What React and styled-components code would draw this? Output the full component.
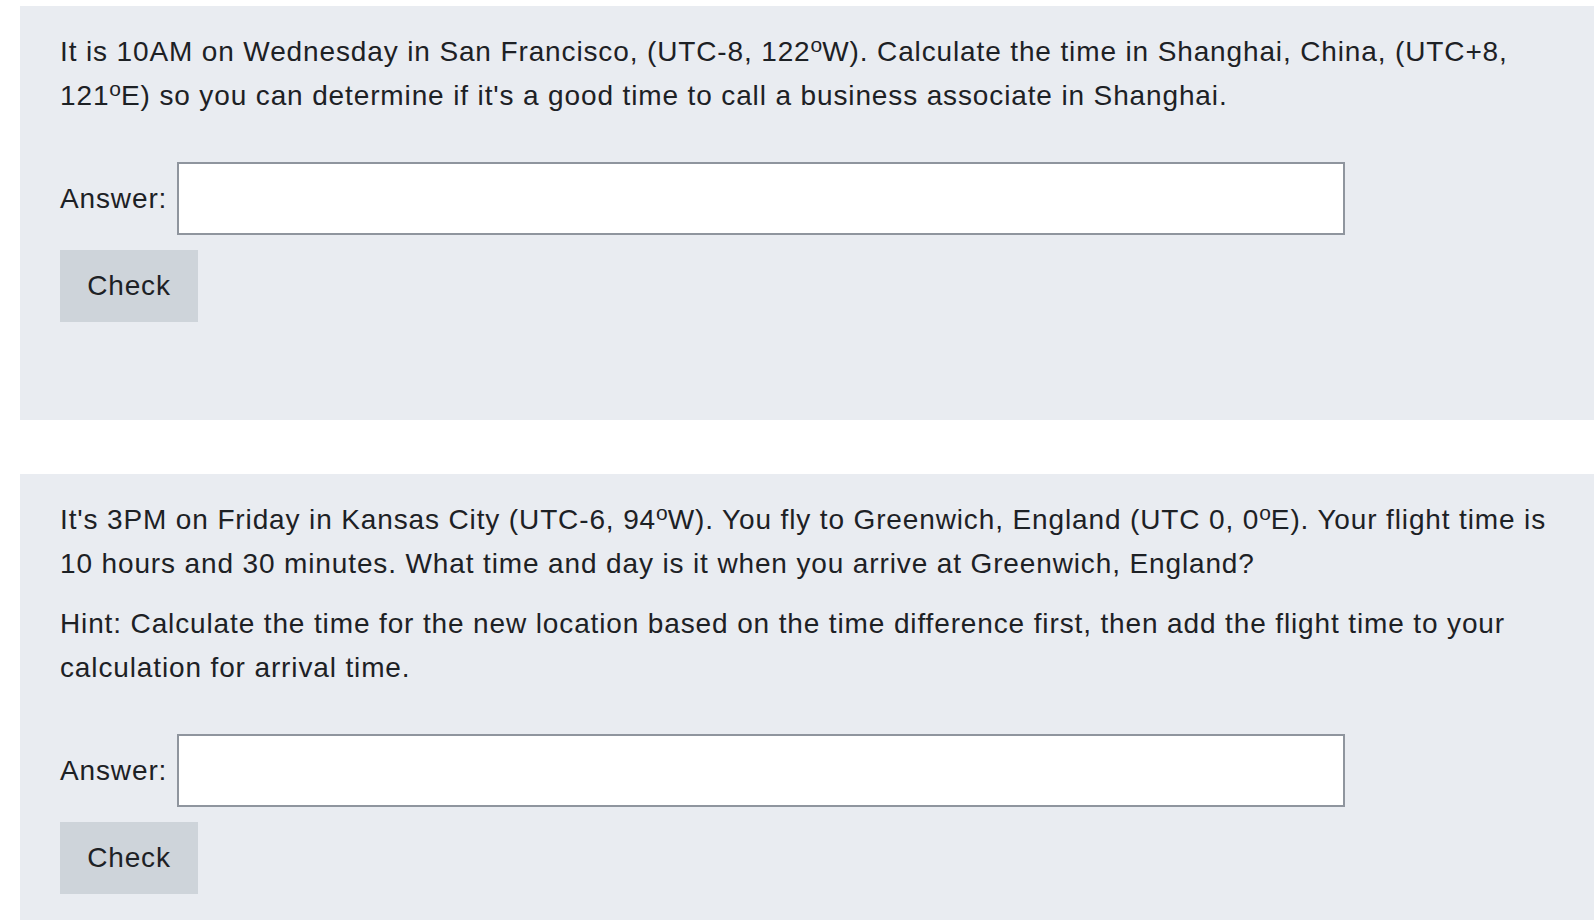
import React from "react";
import styled, { createGlobalStyle } from "styled-components";

const GlobalStyle = createGlobalStyle`
    html, body {
        margin: 0;
        padding: 0;
        background: #ffffff;
        overflow: hidden;
    }
    body {
        font-family: "Liberation Sans", Arial, Helvetica, sans-serif;
        color: #1d2125;
    }
`

const Page = styled.div`
    display: flex;
    flex-direction: column;
    gap: 54px;
    padding: 6px 0 0 20px;
`

const Question = styled.div`
    display: flex;
    flex-direction: column;
    background: #e9ecf1;
    padding: 24px 24px ${props => props.bottom || 98}px 40px;
`

const Text = styled.p`
    margin: 0 0 16px 0;
    font-size: 28px;
    line-height: 44px;
    letter-spacing: 0.87px;
    color: #1d2125;
    &:last-of-type {
        margin-bottom: 44px;
    }
    sup {
        font-size: 75%;
        line-height: 0;
        vertical-align: 0.45em;
        letter-spacing: 0;
    }
`

const AnswerRow = styled.label`
    display: flex;
    align-items: center;
    gap: 10px;
    font-size: 28px;
    letter-spacing: 0.87px;
    color: #1d2125;
`

const AnswerInput = styled.input`
    width: 1168px;
    height: 73px;
    box-sizing: border-box;
    border: 2px solid #8f959e;
    background: #ffffff;
    margin: 0;
    padding: 0 16px;
    font-size: 28px;
    font-family: inherit;
    outline: none;
`

const CheckButton = styled.button`
    align-self: flex-start;
    margin-top: 15px;
    width: 138px;
    height: 72px;
    padding: 0;
    border: none;
    border-radius: 0;
    background: #ced4da;
    color: #1d2125;
    font-family: "Liberation Sans", Arial, Helvetica, sans-serif;
    font-size: 28px;
    letter-spacing: 0.87px;
    cursor: pointer;
`

const Deg = () => <sup>o</sup>

const questions = [
    {
        id: 1,
        paragraphs: [
            <>It is 10AM on Wednesday in San Francisco, (UTC-8, 122<Deg />W). Calculate the time in Shanghai, China, (UTC+8, 121<Deg />E) so you can determine if it's a good time to call a business associate in Shanghai.</>,
        ],
    },
    {
        id: 2,
        paragraphs: [
            <>It's 3PM on Friday in Kansas City (UTC-6, 94<Deg />W). You fly to Greenwich, England (UTC 0, 0<Deg />E). Your flight time is 10 hours and 30 minutes. What time and day is it when you arrive at Greenwich, England?</>,
            <>Hint: Calculate the time for the new location based on the time difference first, then add the flight time to your calculation for arrival time.</>,
        ],
    },
]

const App = () => {
    return (
        <>
            <GlobalStyle />
            <Page>
                {questions.map(q => (
                    <Question key={q.id}>
                        {q.paragraphs.map((p, i) => (
                            <Text key={i}>{p}</Text>
                        ))}
                        <AnswerRow>
                            Answer:
                            <AnswerInput type="text" />
                        </AnswerRow>
                        <CheckButton type="button">Check</CheckButton>
                    </Question>
                ))}
            </Page>
        </>
    )
}

export default App;
